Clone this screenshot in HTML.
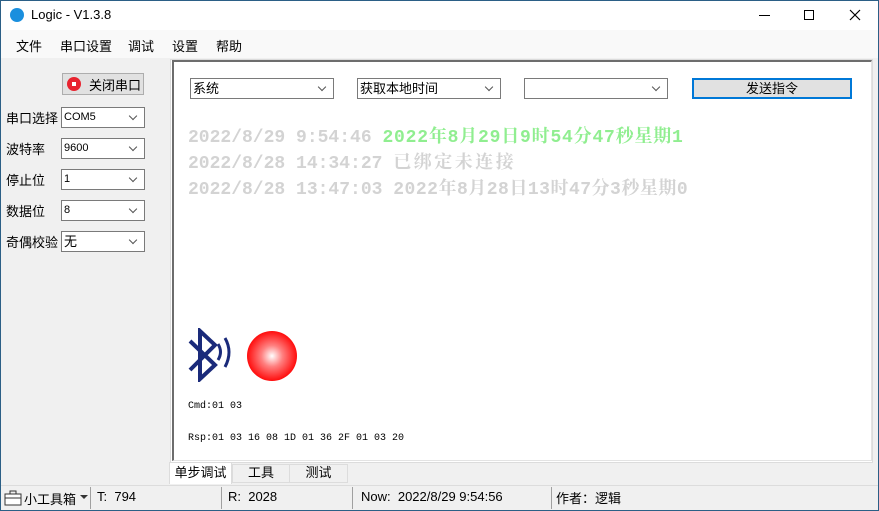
<!DOCTYPE html><html><head><meta charset="utf-8"><style>
*{margin:0;padding:0;box-sizing:border-box}
body{width:879px;height:511px;overflow:hidden;background:#f0f0f0;font-family:"Liberation Sans","Noto Sans CJK SC",sans-serif;font-size:12px;color:#000;position:relative}
.a{position:absolute}
.win{position:absolute;left:0;top:0;width:879px;height:511px;border:1px solid #2b5f86}
.cb{position:absolute;background:#fff;border:1px solid #7a7a7a;height:21px;font-size:12px;line-height:19px;padding-left:2px}
.cb:after{content:"";position:absolute;right:8px;top:5px;width:5px;height:5px;border-right:1px solid #555;border-bottom:1px solid #555;transform:rotate(45deg)}
.sm{font-size:11px;padding-top:2px;line-height:15px}
.lbl{position:absolute;left:6px;font-size:13px}
.ln{position:absolute;left:188px;font-family:"Liberation Mono","Noto Serif CJK SC",monospace;font-weight:bold;font-size:18px;color:#d3d3d3;white-space:nowrap}
.sep{position:absolute;top:487px;width:1px;height:22px;background:#a0a0a0}
</style></head><body>
<div class="a" style="left:0;top:0;width:879px;height:30px;background:#fff"></div>
<div class="a" style="left:10px;top:8px;width:14px;height:14px;border-radius:50%;background:#1a8fde"></div>
<div class="a" style="left:31px;top:7px;font-size:13px">Logic - V1.3.8</div>
<div class="a" style="left:759px;top:15px;width:11px;height:1px;background:#000"></div>
<div class="a" style="left:804px;top:10px;width:10px;height:10px;border:1px solid #000"></div>
<svg class="a" style="left:849px;top:9px" width="12" height="12"><path d="M1 1L11 11M11 1L1 11" stroke="#000" stroke-width="1.2"/></svg>
<div class="a" style="left:0;top:30px;width:879px;height:28px;background:#f9f9f9"></div>
<div class="a" style="left:16px;top:36px;font-size:13px">文件</div>
<div class="a" style="left:60px;top:36px;font-size:13px">串口设置</div>
<div class="a" style="left:128px;top:36px;font-size:13px">调试</div>
<div class="a" style="left:172px;top:36px;font-size:13px">设置</div>
<div class="a" style="left:216px;top:36px;font-size:13px">帮助</div>
<div class="a" style="left:62px;top:73px;width:82px;height:22px;background:#e1e1e1;border:1px solid #adadad"></div>
<div class="a" style="left:67px;top:77px;width:14px;height:14px;border-radius:50%;background:#e8232f"></div>
<div class="a" style="left:72px;top:82px;width:4px;height:4px;background:#fff"></div>
<div class="a" style="left:89px;top:75px;font-size:13px">关闭串口</div>
<div class="lbl" style="top:108px">串口选择</div><div class="cb sm" style="left:61px;top:107px;width:84px">COM5</div>
<div class="lbl" style="top:139px">波特率</div><div class="cb sm" style="left:61px;top:138px;width:84px">9600</div>
<div class="lbl" style="top:170px">停止位</div><div class="cb sm" style="left:61px;top:169px;width:84px">1</div>
<div class="lbl" style="top:201px">数据位</div><div class="cb sm" style="left:61px;top:200px;width:84px">8</div>
<div class="lbl" style="top:232px">奇偶校验</div><div class="cb" style="left:61px;top:231px;width:84px;font-size:13px">无</div>
<div class="a" style="left:170px;top:59px;width:703px;height:404px;border:1px solid #dcdcdc;background:#fff"></div>
<div class="a" style="left:172px;top:60px;width:700px;height:401px;border-top:2px solid #6d6d6d;border-left:2px solid #6d6d6d;border-right:1px solid #e3e3e3;border-bottom:1px solid #e3e3e3;background:#fff"></div>
<div class="cb" style="left:190px;top:78px;width:144px;font-size:13px">系统</div>
<div class="cb" style="left:357px;top:78px;width:144px;font-size:13px">获取本地时间</div>
<div class="cb" style="left:524px;top:78px;width:144px"></div>
<div class="a" style="left:692px;top:78px;width:160px;height:21px;border:2px solid #0078d7;background:#e1e1e1;text-align:center;font-size:13px;line-height:17px">发送指令</div>
<div class="ln" style="top:122px">2022/8/29 9:54:46 <span style="color:#90ee90;letter-spacing:0.8px">2022年8月29日9时54分47秒星期1</span></div>
<div class="ln" style="top:148px">2022/8/28 14:34:27 <span style="letter-spacing:2.5px">已绑定未连接</span></div>
<div class="ln" style="top:174px">2022/8/28 13:47:03 <span style="letter-spacing:0.5px">2022年8月28日13时47分3秒星期0</span></div>
<svg class="a" style="left:184px;top:328px" width="52" height="54"><g fill="none" stroke="#1a2a7a" stroke-width="4"><path d="M6 13 L31 37 L16 51 L16 3 L31 17 L6 42"/><path d="M34 16 Q39 24 34 32" stroke-width="3"/><path d="M41 10 Q49 24 41 39" stroke-width="3"/></g></svg>
<div class="a" style="left:247px;top:331px;width:50px;height:50px;border-radius:50%;background:radial-gradient(circle at 50% 50%,#fff 0%,#ff8080 30%,#f00 75%,#e00 100%)"></div>
<div class="a" style="left:188px;top:401px;font-family:'Liberation Mono',monospace;font-size:10px">Cmd:01 03</div>
<div class="a" style="left:188px;top:433px;font-family:'Liberation Mono',monospace;font-size:10px">Rsp:01 03 16 08 1D 01 36 2F 01 03 20</div>
<div class="a" style="left:169px;top:462px;width:63px;height:22px;background:#fff;border:1px solid #dcdcdc;border-bottom:none;text-align:center;font-size:13px;line-height:20px">单步调试</div>
<div class="a" style="left:232px;top:464px;width:58px;height:19px;border:1px solid #dcdcdc;text-align:center;font-size:13px;line-height:16px">工具</div>
<div class="a" style="left:289px;top:464px;width:59px;height:19px;border:1px solid #dcdcdc;text-align:center;font-size:13px;line-height:16px">测试</div>
<div class="a" style="left:0;top:485px;width:879px;height:1px;background:#dcdcdc"></div>
<svg class="a" style="left:4px;top:490px" width="18" height="16"><rect x="1" y="4" width="16" height="11" fill="#fff" stroke="#333"/><rect x="6" y="1" width="6" height="3" fill="none" stroke="#333"/><line x1="1" y1="8" x2="17" y2="8" stroke="#333"/></svg>
<div class="a" style="left:24px;top:489px;font-size:13px">小工具箱</div>
<div class="a" style="left:80px;top:495px;border-left:4px solid transparent;border-right:4px solid transparent;border-top:4px solid #333"></div>
<div class="sep" style="left:90px"></div>
<div class="a" style="left:97px;top:489px;font-size:13px">T:&nbsp; 794</div>
<div class="sep" style="left:221px"></div>
<div class="a" style="left:228px;top:489px;font-size:13px">R:&nbsp; 2028</div>
<div class="sep" style="left:352px"></div>
<div class="a" style="left:361px;top:489px;font-size:13px">Now:&nbsp; 2022/8/29 9:54:56</div>
<div class="sep" style="left:551px"></div>
<div class="a" style="left:556px;top:488px;font-size:13px">作者：逻辑</div>
<div class="win"></div>
</body></html>
